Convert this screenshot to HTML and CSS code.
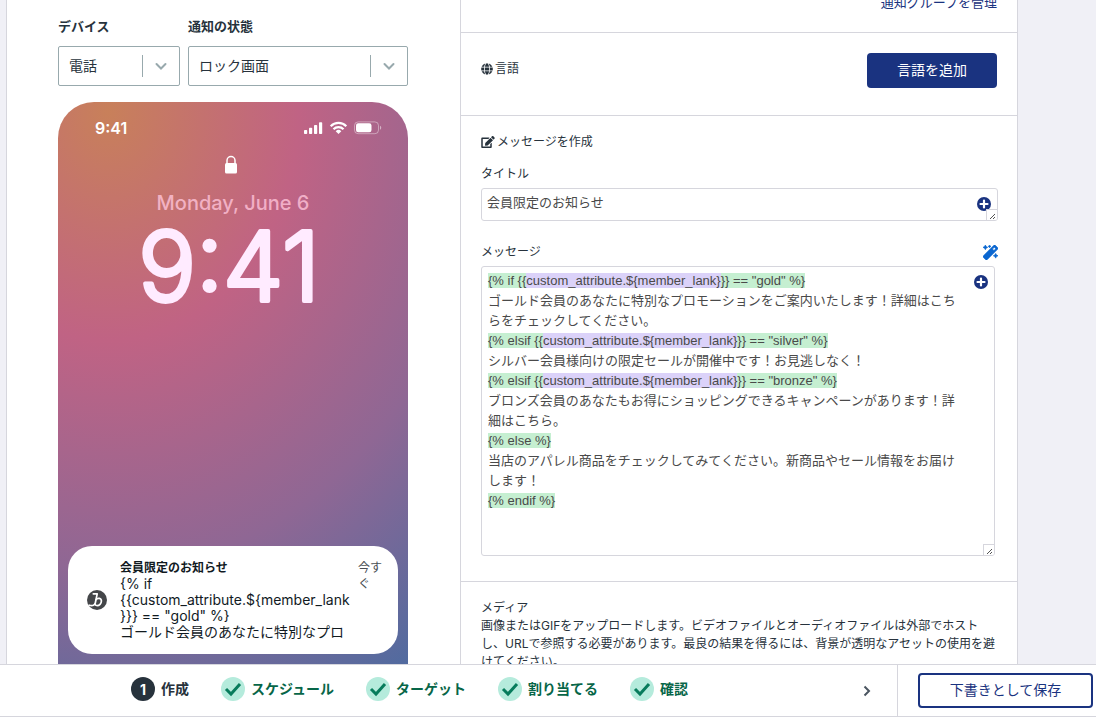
FILE: index.html
```html
<!DOCTYPE html>
<html lang="ja">

<head>
  <meta charset="UTF-8" />
  <meta name="viewport" content="width=device-width, initial-scale=1.0" />
  <title>メッセージを作成</title>
  <link rel="stylesheet" href="styles.css">
</head>

<body>
  <main class="workspace">
    <section class="preview">
      <div class="preview-controls">
        <div class="field device-field">
          <label for="device">デバイス</label>
          <div class="select-wrap">
            <select id="device">
              <option>電話</option>
            </select>
            <svg class="chevron" viewBox="0 0 12 8" width="12" height="8"><path d="M1.5 2 6 6.500l4.500-4.500" /></svg>
          </div>
        </div>
        <div class="field state-field">
          <label for="state">通知の状態</label>
          <div class="select-wrap">
            <select id="state">
              <option>ロック画面</option>
            </select>
            <svg class="chevron" viewBox="0 0 12 8" width="12" height="8"><path d="M1.5 2 6 6.500l4.500-4.500" /></svg>
          </div>
        </div>
      </div>

      <div class="phone">
        <div class="status-bar">
          <span class="status-time">9:41</span>
          <svg width="78" height="14" viewBox="0 0 78 14" fill="#fff">
            <rect x="0" y="9" width="3.200" height="4" rx="0.800" />
            <rect x="5" y="6.700" width="3.200" height="6.300" rx="0.800" />
            <rect x="10" y="4" width="3.200" height="9" rx="0.800" />
            <rect x="15" y="1.300" width="3.200" height="11.700" rx="0.800" />
            <g fill="none" stroke="#fff" stroke-width="2.200">
              <path d="M26.700 5.200a11 11 0 0 1 15.600 0" />
              <path d="M29.500 8.200a7 7 0 0 1 10 0" />
            </g>
            <path d="M31.700 10.200a4 4 0 0 1 5.600 0l-2.800 2.800z" />
            <rect x="50.500" y="0.900" width="24" height="11.800" rx="3.600" fill="none" stroke="#fff" stroke-opacity="0.400" />
            <rect x="52" y="2.300" width="15.500" height="9" rx="2.200" />
            <path d="M76 4.800c1.700.7 1.700 3.300 0 4z" fill-opacity="0.500" />
          </svg>
        </div>
        <svg class="lock" width="14" height="20" viewBox="0 0 14 20">
          <path d="M3 9V5.500a4 4 0 0 1 8 0V9" fill="none" stroke="#fff" stroke-width="1.500" />
          <rect x="1" y="8" width="12" height="10.500" rx="1.500" fill="#fff" />
        </svg>
        <div class="lock-date">Monday, June 6</div>
        <svg class="lock-time" width="220" height="110" viewBox="0 0 220 110">
          <text x="110" y="79" text-anchor="middle">9:41</text>
        </svg>

        <div class="notification">
          <svg class="app-logo" width="20" height="20" viewBox="0 0 20 20">
            <circle cx="10" cy="10" r="10" fill="#444649" />
            <g fill="none" stroke="#fff" stroke-width="1.700" stroke-linecap="round" stroke-linejoin="round">
              <path d="M6.300 3.800h3.900L8.300 13c-.5 2.200-2.600 3.300-6 2.200" />
              <path d="M9 9.500c1.800-2 5.400-1.500 5.400 1.500 0 2.700-2.200 4.600-4.200 4.600-1.300 0-2-.6-2.100-1.600" />
            </g>
          </svg>
          <div class="notification-text">
            <strong>会員限定のお知らせ</strong>
            <p>{% if {{custom_attribute.${member_lank}}} == "gold" %}<br>ゴールド会員のあなたに特別なプロ</p>
          </div>
          <span class="notification-when">今すぐ</span>
        </div>
      </div>
    </section>

    <section class="editor">
      <div class="panel groups-panel">
        <a href="#">通知グループを管理</a>
      </div>

      <div class="panel language-panel">
        <h2>
          <svg width="12" height="12" viewBox="0 0 496 512" fill="currentColor"><path d="M336.500 160C322 70.700 287.800 8 248 8s-74 62.700-88.500 152h177zM152 256c0 22.200 1.200 43.500 3.300 64h185.300c2.100-20.500 3.300-41.800 3.300-64s-1.200-43.500-3.300-64H155.300c-2.100 20.500-3.300 41.800-3.300 64zm324.700-96c-28.600-67.900-86.500-120.400-158-141.600 24.400 33.800 41.200 84.700 50 141.600h108zM177.200 18.400C105.800 39.600 47.800 92.100 19.300 160h108c8.700-56.900 25.500-107.800 49.900-141.600zM487.400 192H372.700c2.100 21 3.300 42.500 3.300 64s-1.200 43-3.300 64h114.600c5.500-20.500 8.600-41.800 8.600-64s-3.100-43.500-8.500-64zM120 256c0-21.500 1.200-43 3.300-64H8.600C3.200 212.500 0 233.800 0 256s3.200 43.500 8.600 64h114.600c-2-21-3.200-42.500-3.200-64zm39.500 96c14.500 89.300 48.700 152 88.500 152s74-62.700 88.500-152h-177zm159.300 141.600c71.400-21.200 129.400-73.700 158-141.600h-108c-8.800 56.900-25.600 107.800-50 141.600zM19.300 352c28.600 67.900 86.500 120.400 158 141.600-24.400-33.800-41.200-84.700-50-141.600h-108z" /></svg>
          言語
        </h2>
        <button class="primary" type="button">言語を追加</button>
      </div>

      <div class="panel compose-panel">
        <h2>
          <svg width="14" height="12" viewBox="0 0 576 512" fill="currentColor"><path d="M402.600 83.200l90.200 90.200c3.800 3.800 3.800 10 0 13.800L274.400 405.600l-92.800 10.300c-12.400 1.400-22.900-9.100-21.500-21.500l10.300-92.800L388.800 83.200c3.800-3.800 10-3.800 13.800 0zm162-22.900l-48.800-48.800c-15.200-15.200-39.900-15.200-55.200 0l-35.400 35.400c-3.800 3.800-3.800 10 0 13.800l90.200 90.200c3.800 3.800 10 3.800 13.800 0l35.400-35.400c15.200-15.300 15.200-40 0-55.200zM384 346.200V448H64V128h229.800c3.200 0 6.200-1.300 8.500-3.500l40-40c7.600-7.600 2.200-20.500-8.500-20.500H48C21.500 64 0 85.500 0 112v352c0 26.500 21.500 48 48 48h352c26.500 0 48-21.500 48-48V306.200c0-10.700-12.900-16-20.500-8.500l-40 40c-2.200 2.300-3.500 5.300-3.500 8.500z" /></svg>
          メッセージを作成
        </h2>

        <label class="title-label" for="title">タイトル</label>
        <div class="text-box title-box">
          <textarea id="title" rows="1">会員限定のお知らせ</textarea>
          <button class="add-tag" type="button" aria-label="追加">
            <svg width="14" height="14" viewBox="0 0 14 14"><circle cx="7" cy="7" r="7" fill="#1a3380" /><path d="M7 3.500v7M3.500 7h7" stroke="#fff" stroke-width="2.200" stroke-linecap="round" /></svg>
          </button>
          <svg class="grip" width="10" height="10" viewBox="0 0 10 10"><path d="M3 9l5-5M6 9l2-2" /></svg>
        </div>

        <div class="message-head">
          <label for="message">メッセージ</label>
          <button class="wand" type="button" aria-label="生成">
            <svg width="15" height="15" viewBox="0 0 512 512" fill="#0a66d0"><path d="M224 96l16-32 32-16-32-16-16-32-16 32-32 16 32 16 16 32zM80 160l26.660-53.330L160 80l-53.340-26.670L80 0 53.340 53.330 0 80l53.340 26.670L80 160zm352 128l-26.660 53.330L352 368l53.340 26.670L432 448l26.660-53.330L512 368l-53.340-26.670L432 288zm70.620-193.770L417.770 9.380C411.530 3.120 403.340 0 395.150 0c-8.190 0-16.380 3.120-22.630 9.380L9.380 372.520c-12.500 12.500-12.500 32.760 0 45.250l84.850 84.850c6.250 6.250 14.440 9.370 22.620 9.370 8.190 0 16.380-3.120 22.630-9.370l363.140-363.150c12.500-12.480 12.500-32.750 0-45.240zM374 189l-51-51 60-60 51 51-60 60z" stroke="#0a66d0" stroke-width="22" /></svg>
          </button>
        </div>
        <div class="text-box message-box">
          <!-- colours the Liquid tags behind the textarea -->
          <div class="highlights" id="highlights" aria-hidden="true"></div>
          <textarea id="message" spellcheck="false">{% if {{custom_attribute.${member_lank}}} == "gold" %}
ゴールド会員のあなたに特別なプロモーションをご案内いたします！詳細はこちらをチェックしてください。
{% elsif {{custom_attribute.${member_lank}}} == "silver" %}
シルバー会員様向けの限定セールが開催中です！お見逃しなく！
{% elsif {{custom_attribute.${member_lank}}} == "bronze" %}
ブロンズ会員のあなたもお得にショッピングできるキャンペーンがあります！詳細はこちら。
{% else %}
当店のアパレル商品をチェックしてみてください。新商品やセール情報をお届けします！
{% endif %}</textarea>
          <button class="add-tag" type="button" aria-label="追加">
            <svg width="14" height="14" viewBox="0 0 14 14"><circle cx="7" cy="7" r="7" fill="#1a3380" /><path d="M7 3.500v7M3.500 7h7" stroke="#fff" stroke-width="2.200" stroke-linecap="round" /></svg>
          </button>
          <svg class="grip" width="10" height="10" viewBox="0 0 10 10"><path d="M3 9l5-5M6 9l2-2" /></svg>
        </div>
      </div>

      <div class="panel media-panel">
        <h2>メディア</h2>
        <p>画像またはGIFをアップロードします。ビデオファイルとオーディオファイルは外部でホストし、URLで参照する必要があります。最良の結果を得るには、背景が透明なアセットの使用を避けてください。</p>
      </div>
    </section>
  </main>

  <footer class="footer">
    <nav class="steps">
      <a class="step current" href="#"><span class="badge">1</span><span class="step-name">作成</span></a>
      <a class="step" href="#"><span class="badge"><svg width="18" height="16" viewBox="0 0 18 16"><path d="M2 8l5 5 9-10" /></svg></span><span class="step-name">スケジュール</span></a>
      <a class="step" href="#"><span class="badge"><svg width="18" height="16" viewBox="0 0 18 16"><path d="M2 8l5 5 9-10" /></svg></span><span class="step-name">ターゲット</span></a>
      <a class="step" href="#"><span class="badge"><svg width="18" height="16" viewBox="0 0 18 16"><path d="M2 8l5 5 9-10" /></svg></span><span class="step-name">割り当てる</span></a>
      <a class="step" href="#"><span class="badge"><svg width="18" height="16" viewBox="0 0 18 16"><path d="M2 8l5 5 9-10" /></svg></span><span class="step-name">確認</span></a>
    </nav>
    <button class="next" type="button" aria-label="次へ">
      <svg width="8" height="12" viewBox="0 0 8 12"><path d="M1.500 1.500 6 6l-4.500 4.500" /></svg>
    </button>
    <div class="save">
      <button class="outline" type="button">下書きとして保存</button>
    </div>
  </footer>

  <script>
    const message = document.getElementById("message");
    const highlights = document.getElementById("highlights");

    function renderHighlights() {
      highlights.innerHTML = message.value
        .replace(/&/g, "&amp;")
        .replace(/</g, "&lt;")
        .replace(/\{%.*?%\}/g, tag => `<mark>${tag}</mark>`)
        .replace(/custom_attribute\.\$\{\w+\}/g, attr => `<mark class="attribute">${attr}</mark>`);
    }

    message.addEventListener("input", renderHighlights);
    renderHighlights();
  </script>
</body>

</html>
```
FILE: styles.css
```css
* {
  box-sizing: border-box;
}

body {
  margin: 0;
  height: 100vh;
  padding-bottom: 4px;
  display: flex;
  flex-direction: column;
  overflow: hidden;
  background: #fff;
  color: #27323c;
  font-family: Inter, "Noto Sans CJK JP", sans-serif;
  font-size: 12px;
}

h2,
p {
  margin: 0;
}

h2 {
  display: flex;
  align-items: center;
  gap: 2px;
  font-size: 12px;
  font-weight: 400;
  line-height: 20px;
}

button,
select,
textarea {
  font-family: inherit;
  color: inherit;
}

button {
  padding: 0;
  border: 0;
  background: none;
  cursor: pointer;
}

svg {
  display: block;
  flex: none;
}

.workspace {
  flex: 1;
  min-height: 0;
  display: flex;
  overflow: hidden;
  padding: 0 78px 0 6px;
  background: #f0f0f6;
}

/* preview */
.preview {
  width: 454px;
  flex: none;
  padding: 16px 52px 0 51px;
  border-left: 1px solid #d6d6dd;
  background: #fff;
}

.preview-controls {
  display: flex;
  gap: 8px;
}

.device-field {
  flex: 122;
}

.state-field {
  flex: 220;
}

.field label {
  display: block;
  margin-bottom: 10px;
  font-size: 13px;
  font-weight: 700;
  line-height: 20px;
}

.select-wrap {
  display: grid;
  align-items: center;
}

.select-wrap select,
.select-wrap .chevron {
  grid-area: 1 / 1;
}

.select-wrap select {
  width: 100%;
  height: 40px;
  padding: 0 48px 2px 10px;
  border: 1px solid #98a9ad;
  border-radius: 2px;
  appearance: none;
  background: linear-gradient(#98a9ad, #98a9ad) right 36px center / 1px 22px no-repeat #fff;
  font-size: 14px;
}

.chevron {
  justify-self: end;
  margin-right: 13px;
  fill: none;
  stroke: #98a9ad;
  stroke-width: 2;
  stroke-linecap: round;
  pointer-events: none;
}

.phone {
  display: flex;
  flex-direction: column;
  align-items: center;
  height: 710px;
  margin-top: 16px;
  padding: 0 10px;
  border-radius: 36px;
  background: radial-gradient(500px 600px at 50px 10px, #c8805a 0%, #c06384 38%, #8f6794 76%, #4d6ba0 112%);
  color: #fff;
}

.status-bar {
  align-self: stretch;
  display: flex;
  justify-content: space-between;
  align-items: center;
  height: 20px;
  margin-top: 16px;
  padding: 0 16px 0 27px;
}

.status-time {
  font-size: 16px;
  font-weight: 600;
}

.lock {
  margin: 17px 4px 0 0;
}

.lock-date {
  margin-top: 16px;
  font-size: 20px;
  font-weight: 500;
  line-height: 24px;
  color: rgba(255, 196, 218, 0.8);
}

/* light digits with a round outline give the soft lock screen numerals */
.lock-time {
  margin: 7px 8px 0 0;
  overflow: visible;
  font-size: 96px;
  font-weight: 300;
  fill: #ffebff;
  stroke: #ffebff;
  stroke-width: 4px;
  stroke-linejoin: round;
}

.notification {
  align-self: stretch;
  display: flex;
  align-items: flex-start;
  height: 108px;
  margin-top: 214px;
  padding: 14px 12px 0 19px;
  border-radius: 24px;
  background: #fff;
  color: #111a1f;
}

.app-logo {
  align-self: center;
  margin: 0 13px 14px 0;
}

.notification-text {
  flex: 1;
  min-width: 0;
}

.notification strong {
  display: block;
  font-size: 12px;
  line-height: 16px;
}

.notification p {
  font-size: 14px;
  line-height: 16px;
  word-break: break-word;
}

.notification-when {
  width: 28px;
  margin-left: 4px;
  line-height: 16px;
  color: #4a4f55;
}

/* editor */
.editor {
  flex: 1;
  min-width: 0;
  border: solid #d6d6dd;
  border-width: 0 1px;
  background: #fff;
}

.panel {
  padding: 0 19px 0 20px;
  border-bottom: 1px solid #d6d6dd;
}

.groups-panel {
  height: 41px;
  margin-top: -8px;
  padding-right: 20px;
  text-align: right;
}

.groups-panel a {
  color: #1a3380;
  font-size: 13px;
  line-height: 20px;
  text-decoration: none;
}

.language-panel {
  display: flex;
  justify-content: space-between;
  align-items: flex-start;
  padding: 20px 20px 27px;
}

.language-panel h2 {
  margin-top: 6px;
}

.primary {
  width: 130px;
  height: 35px;
  padding-bottom: 4px;
  border-radius: 4px;
  background: #1a3380;
  color: #fff;
  font-size: 14px;
}

.compose-panel {
  padding-top: 16px;
  padding-bottom: 25px;
}

.compose-panel label {
  display: block;
  line-height: 20px;
}

.compose-panel .title-label {
  margin: 12px 0 4px;
}

.text-box {
  display: grid;
  grid-template-columns: minmax(0, 1fr);
  overflow: hidden;
  border: 1px solid #d6d6dd;
  border-radius: 3px;
}

.text-box > * {
  grid-area: 1 / 1;
}

.text-box textarea,
.highlights {
  margin: 0;
  padding: 4px 34px 4px 6px;
  border: 0;
  outline: 0;
  resize: none;
  overflow: hidden;
  background: transparent;
  color: #4a4a4a;
  font-family: "Liberation Sans", "Noto Sans CJK JP", sans-serif;
  font-size: 13px;
  line-height: 20px;
  white-space: pre-wrap;
  overflow-wrap: break-word;
}

.title-box {
  height: 33px;
}

.title-box textarea {
  padding-left: 5px;
}

.message-head {
  display: flex;
  justify-content: space-between;
  align-items: center;
  margin: 21px 0 4px;
}

.message-box {
  height: 290px;
  margin-right: 3px;
}

.highlights,
.message-box .highlights mark {
  color: transparent;
}

mark {
  background: #c5efd1;
}

mark .attribute {
  background: #dbd2f9;
}

.add-tag {
  align-self: start;
  justify-self: end;
  margin: 8px 6px 0 0;
}

.grip {
  align-self: end;
  justify-self: end;
  box-sizing: content-box;
  border: solid #d6d6dd;
  border-width: 1px 0 0 1px;
  background: #fff;
  fill: none;
  stroke: #555;
}

.media-panel {
  padding-top: 17px;
  border-bottom: 0;
  line-height: 18px;
}

.media-panel h2 {
  line-height: 18px;
}

/* footer */
.footer {
  display: flex;
  flex: none;
  height: 53px;
  border: solid #d6d6dd;
  border-width: 1px 0;
  background: #fff;
}

.steps {
  flex: 1;
  display: flex;
  align-items: center;
  gap: 32px;
  padding: 0 0 3px 131px;
}

.step {
  display: flex;
  align-items: center;
  gap: 6px;
  color: #076648;
  font-size: 14px;
  font-weight: 700;
  text-decoration: none;
  white-space: nowrap;
}

.step-name {
  padding-bottom: 3px;
}

.badge {
  display: grid;
  place-items: center;
  width: 24px;
  height: 24px;
  border-radius: 50%;
  background: #b5ebdc;
}

.badge path {
  fill: none;
  stroke: #077c5c;
  stroke-width: 3;
}

.step.current {
  color: #27323c;
}

.current .badge {
  background: #27323c;
  color: #fff;
}

.next {
  padding: 0 26px 0 0;
}

.next path {
  fill: none;
  stroke: #4a5560;
  stroke-width: 2;
}

.save {
  padding: 8px 3px 0 20px;
  border-left: 1px solid #d6d6dd;
}

.outline {
  width: 175px;
  height: 35px;
  padding-bottom: 3px;
  border: 2px solid #1a3380;
  border-radius: 4px;
  color: #1a3380;
  font-size: 14px;
}
```
